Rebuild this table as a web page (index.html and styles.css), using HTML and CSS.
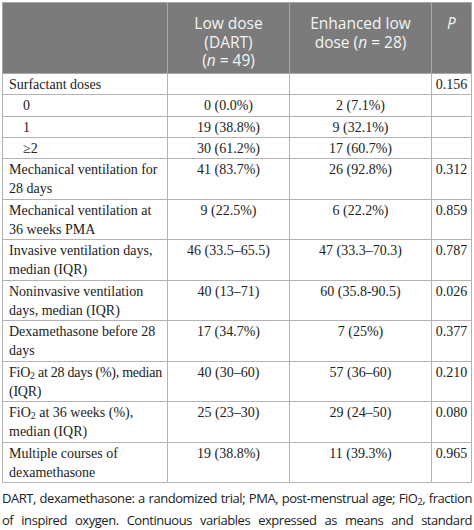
FILE: index.html
```html
<!DOCTYPE html>
<html>
<head>
<meta charset="utf-8">
<link rel="stylesheet" href="styles.css">
</head>
<body>
<div class="page">
  <table class="data">
    <colgroup>
      <col class="c1"><col class="c2"><col class="c3"><col class="c4">
    </colgroup>
    <thead>
      <tr class="head">
        <th></th>
        <th>Low dose<br>(DART)<br>(<i>n</i> = 49)</th>
        <th>Enhanced low<br>dose (<i>n</i> = 28)</th>
        <th><i>P</i></th>
      </tr>
    </thead>
    <tbody>
      <tr><td class="lab">Surfactant doses</td><td></td><td></td><td class="p">0.156</td></tr>
      <tr><td class="lab sub">0</td><td>0 (0.0%)</td><td>2 (7.1%)</td><td class="p"></td></tr>
      <tr><td class="lab sub">1</td><td>19 (38.8%)</td><td>9 (32.1%)</td><td class="p"></td></tr>
      <tr><td class="lab sub">≥2</td><td>30 (61.2%)</td><td>17 (60.7%)</td><td class="p"></td></tr>
      <tr><td class="lab">Mechanical ventilation for<br>28 days</td><td>41 (83.7%)</td><td>26 (92.8%)</td><td class="p">0.312</td></tr>
      <tr><td class="lab">Mechanical ventilation at<br>36 weeks PMA</td><td>9 (22.5%)</td><td>6 (22.2%)</td><td class="p">0.859</td></tr>
      <tr><td class="lab">Invasive ventilation days,<br>median (IQR)</td><td>46 (33.5–65.5)</td><td>47 (33.3–70.3)</td><td class="p">0.787</td></tr>
      <tr><td class="lab">Noninvasive ventilation<br>days, median (IQR)</td><td>40 (13–71)</td><td>60 (35.8-90.5)</td><td class="p">0.026</td></tr>
      <tr><td class="lab">Dexamethasone before 28<br>days</td><td>17 (34.7%)</td><td>7 (25%)</td><td class="p">0.377</td></tr>
      <tr><td class="lab tight">FiO<sub>2</sub> at 28 days (%), median<br>(IQR)</td><td>40 (30–60)</td><td>57 (36–60)</td><td class="p">0.210</td></tr>
      <tr><td class="lab">FiO<sub>2</sub> at 36 weeks (%),<br>median (IQR)</td><td>25 (23–30)</td><td>29 (24–50)</td><td class="p">0.080</td></tr>
      <tr><td class="lab">Multiple courses of<br>dexamethasone</td><td>19 (38.8%)</td><td>11 (39.3%)</td><td class="p">0.965</td></tr>
    </tbody>
  </table>
  <div class="caption">
    <div class="cline">DART, dexamethasone: a randomized trial; PMA, post-menstrual age; FiO<sub>2</sub>, fraction</div>
    <div class="cline">of inspired oxygen. Continuous variables expressed as means and standard</div>
  </div>
</div>
</body>
</html>
```

FILE: styles.css
```css
html, body {
  margin: 0;
  padding: 0;
  background: #ffffff;
}

.page {
  width: 474px;
  height: 530px;
  overflow: hidden;
  padding: 2px 0 0 2px;
  box-sizing: border-box;
}

.data {
  width: 469px;
  border-collapse: collapse;
  table-layout: fixed;
  font-family: "Liberation Serif", "Times New Roman", serif;
  font-size: 14px;
  color: #222;
}

.c1 { width: 165px; }
.c2 { width: 122px; }
.c3 { width: 142px; }
.c4 { width: 40px; }

.head {
  height: 71px;
}

.head th {
  background: #7b7b7b;
  color: #f4f4f4;
  font-family: "Open Sans", "Noto Sans", sans-serif;
  font-weight: normal;
  font-size: 15.5px;
  line-height: 18.5px;
  vertical-align: top;
  text-align: center;
  padding: 11px 2px 0;
  border: 1px solid #a8a8a8;
}

.data td {
  border: 1px solid #b3b3b3;
  line-height: 19.25px;
  padding: 1px 3px 0;
  vertical-align: top;
  text-align: center;
  white-space: nowrap;
}

.data td.lab {
  text-align: left;
  padding-left: 6px;
  padding-right: 0;
}

.data td.tight {
  letter-spacing: -0.25px;
}

.data td.sub {
  padding-left: 20px;
}

.data td.p {
  padding: 1px 0 0;
}

sub {
  font-size: 0.7em;
  line-height: 0;
  vertical-align: -0.25em;
}

.caption {
  margin-top: 4px;
  width: 470px;
  font-family: "Open Sans", "Noto Sans", sans-serif;
  font-size: 13px;
  letter-spacing: -0.45px;
  line-height: 22px;
  color: #222;
}

.cline {
  text-align: justify;
  text-align-last: justify;
}
```
